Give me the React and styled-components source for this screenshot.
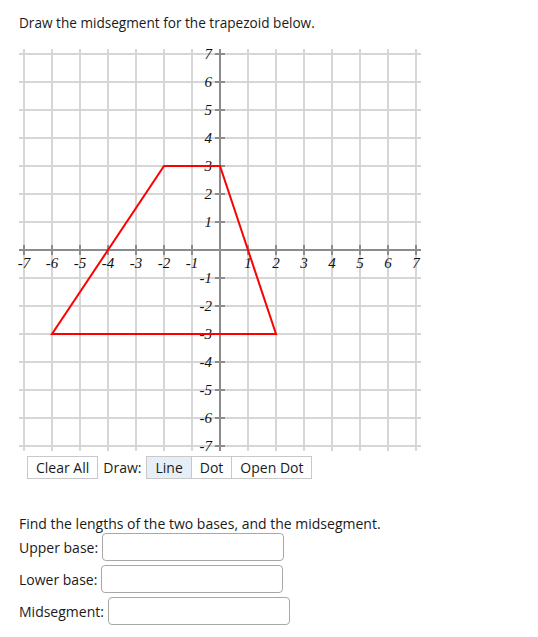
import React from "react";
import styled, { createGlobalStyle } from "styled-components";

const Global = createGlobalStyle`
  html, body { margin: 0; padding: 0; background: #fff; }
  body { font-family: "Open Sans", "DejaVu Sans", sans-serif; color: #1a1a1a; }
`;

const Page = styled.div`
  padding: 13px 0 0 19px;
  width: 519px;
`;

const Prompt = styled.p`
  margin: 0 0 15px 0;
  font-size: 13.6px;
  line-height: 20px;
`;

const Board = styled.svg`
  display: block;
  margin-left: -1px;
  width: 404px;
  height: 404px;
  overflow: visible;
`;

const Toolbar = styled.div`
  display: flex;
  align-items: center;
  margin: 4px 0 0 8px;
  font-size: 14px;
`;

const ToolButton = styled.button`
  font-family: inherit;
  font-size: 14px;
  color: #1a1a1a;
  height: 23px;
  padding: 0 8px;
  margin: 0;
  border: 1px solid #c8c8c8;
  margin-left: ${(p) => (p.$joined ? "-1px" : "0")};
  background: ${(p) => (p.$active ? "#e6eef7" : "#fff")};
  border-radius: 0;
  cursor: pointer;
`;

const ToolLabel = styled.span`
  padding: 0 5px;
`;

const Question = styled.div`
  margin-top: 35px;
  font-size: 14px;
`;

const QuestionText = styled.p`
  margin: 0 0 -3px 0;
  line-height: 20px;
`;

const Row = styled.div`
  display: flex;
  align-items: center;
  height: 32px;
`;

const Label = styled.label`
  margin-right: 4px;
`;

const Field = styled.input`
  width: 182px;
  height: 28px;
  box-sizing: border-box;
  border: 1px solid #a8a8a8;
  border-radius: 4px;
  padding: 2px 4px;
  font-family: inherit;
  font-size: 14px;
`;

const U = 28;
const C = 202;
const X = (v) => C + v * U;
const Y = (v) => C - v * U;
const range = Array.from({ length: 15 }, (_, i) => i - 7);

function Graph() {
  const pts = [
    [-2, 3],
    [0, 3],
    [2, -3],
    [-6, -3],
  ];
  const poly = pts.map(([a, b]) => `${X(a)},${Y(b)}`).join(" ");
  return (
    <Board viewBox="0 0 404 404">
      {range.map((v) => (
        <g key={"g" + v}>
          <line x1={X(v)} y1={1} x2={X(v)} y2={403} stroke="#d6d6d6" strokeWidth="2" />
          <line x1={1} y1={Y(v)} x2={403} y2={Y(v)} stroke="#d6d6d6" strokeWidth="2" />
        </g>
      ))}
      <line x1={X(0)} y1={1} x2={X(0)} y2={403} stroke="#8c8c8c" strokeWidth="2" />
      <line x1={1} y1={Y(0)} x2={403} y2={Y(0)} stroke="#8c8c8c" strokeWidth="2" />
      {range.map((v) => (
        <g key={"t" + v}>
          <line x1={X(v)} y1={Y(0) - 5} x2={X(v)} y2={Y(0) + 5} stroke="#8c8c8c" strokeWidth="2" />
          <line x1={X(0) - 5} y1={Y(v)} x2={X(0) + 5} y2={Y(v)} stroke="#8c8c8c" strokeWidth="2" />
        </g>
      ))}
      <g fontFamily='"Liberation Serif", "DejaVu Serif", serif' fontStyle="italic" fontSize="15" fill="#111">
        {range
          .filter((v) => v !== 0)
          .map((v) => (
            <text key={"x" + v} x={X(v)} y={Y(0) + 18} textAnchor="middle">
              {v < 0 ? `-${-v}` : v}
            </text>
          ))}
        {range
          .filter((v) => v !== 0)
          .map((v) => (
            <text key={"y" + v} x={X(0) - 8} y={Y(v) + 5} textAnchor="end">
              {v < 0 ? `-${-v}` : v}
            </text>
          ))}
      </g>
      <polygon points={poly} fill="none" stroke="#ff0000" strokeWidth="2" strokeLinejoin="miter" />
    </Board>
  );
}

export default function App() {
  return (
    <>
      <Global />
      <Page>
        <Prompt>Draw the midsegment for the trapezoid below.</Prompt>
        <Graph />
        <Toolbar>
          <ToolButton>Clear All</ToolButton>
          <ToolLabel>Draw:</ToolLabel>
          <ToolButton $active>Line</ToolButton>
          <ToolButton $joined>Dot</ToolButton>
          <ToolButton $joined>Open Dot</ToolButton>
        </Toolbar>
        <Question>
          <QuestionText>Find the lengths of the two bases, and the midsegment.</QuestionText>
          <Row>
            <Label htmlFor="ub">Upper base:</Label>
            <Field id="ub" type="text" />
          </Row>
          <Row>
            <Label htmlFor="lb">Lower base:</Label>
            <Field id="lb" type="text" />
          </Row>
          <Row>
            <Label htmlFor="ms">Midsegment:</Label>
            <Field id="ms" type="text" />
          </Row>
        </Question>
      </Page>
    </>
  );
}
